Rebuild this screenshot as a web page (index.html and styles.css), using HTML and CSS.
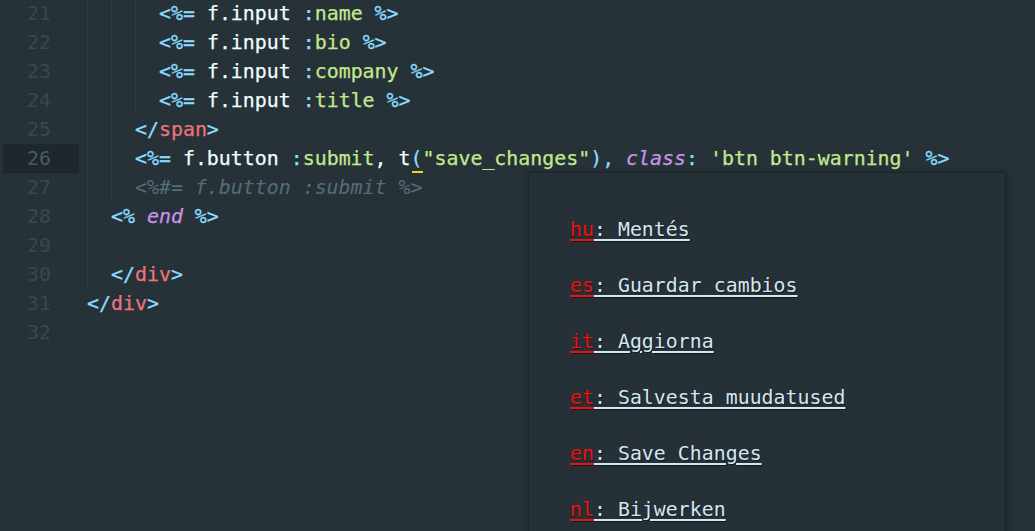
FILE: index.html
```html
<!DOCTYPE html>
<html>
<head>
<meta charset="utf-8">
<link rel="stylesheet" href="styles.css">
</head>
<body>
<div class="editor">
  <div class="line"><div class="num">21</div><div class="code"><span class="g"></span><span class="g"></span><span class="g"></span><span class="c">&lt;%=</span> <span class="w">f.input</span> <span class="c">:</span><span class="s">name</span> <span class="c">%&gt;</span></div></div>
  <div class="line"><div class="num">22</div><div class="code"><span class="g"></span><span class="g"></span><span class="g"></span><span class="c">&lt;%=</span> <span class="w">f.input</span> <span class="c">:</span><span class="s">bio</span> <span class="c">%&gt;</span></div></div>
  <div class="line"><div class="num">23</div><div class="code"><span class="g"></span><span class="g"></span><span class="g"></span><span class="c">&lt;%=</span> <span class="w">f.input</span> <span class="c">:</span><span class="s">company</span> <span class="c">%&gt;</span></div></div>
  <div class="line"><div class="num">24</div><div class="code"><span class="g"></span><span class="g"></span><span class="g"></span><span class="c">&lt;%=</span> <span class="w">f.input</span> <span class="c">:</span><span class="s">title</span> <span class="c">%&gt;</span></div></div>
  <div class="line"><div class="num">25</div><div class="code"><span class="g"></span><span class="g"></span><span class="c">&lt;/</span><span class="r">span</span><span class="c">&gt;</span></div></div>
  <div class="line active"><div class="num">26</div><div class="code"><span class="g"></span><span class="g"></span><span class="c">&lt;%=</span> <span class="w">f.button</span> <span class="c">:</span><span class="s">submit</span><span class="w">,</span> <span class="w">t</span><span class="c match">(</span><span class="s">"save_changes"</span><span class="c">),</span> <span class="p">class</span><span class="c">:</span> <span class="s">'btn btn-warning'</span> <span class="c">%&gt;</span></div></div>
  <div class="line"><div class="num">27</div><div class="code"><span class="g"></span><span class="g"></span><span class="cm">&lt;%#= f.button :submit %&gt;</span></div></div>
  <div class="line"><div class="num">28</div><div class="code"><span class="g"></span><span class="c">&lt;%</span> <span class="p">end</span> <span class="c">%&gt;</span></div></div>
  <div class="line"><div class="num">29</div><div class="code"><span class="g"></span></div></div>
  <div class="line"><div class="num">30</div><div class="code"><span class="g"></span><span class="c">&lt;/</span><span class="r">div</span><span class="c">&gt;</span></div></div>
  <div class="line"><div class="num">31</div><div class="code"><span class="c">&lt;/</span><span class="r">div</span><span class="c">&gt;</span></div></div>
  <div class="line"><div class="num">32</div><div class="code"></div></div>
</div>

<div class="popup">
  <a class="item"><span class="lang">hu</span>: Mentés</a>
  <a class="item"><span class="lang">es</span>: Guardar cambios</a>
  <a class="item"><span class="lang">it</span>: Aggiorna</a>
  <a class="item"><span class="lang">et</span>: Salvesta muudatused</a>
  <a class="item"><span class="lang">en</span>: Save Changes</a>
  <a class="item"><span class="lang">nl</span>: Bijwerken</a>
</div>
</body>
</html>
```

FILE: styles.css
```css
html, body {
  margin: 0;
  padding: 0;
  background: #263238;
  overflow: hidden;
  width: 1035px;
  height: 531px;
}

body {
  position: relative;
  font-family: "DejaVu Sans Mono", "Liberation Mono", monospace;
  font-size: 19.9px;
}

.editor {
  margin-top: -1px;
  display: flex;
  flex-direction: column;
}

.line {
  display: flex;
  height: 29px;
  line-height: 29px;
}

.num {
  width: 76px;
  margin-left: 3px;
  margin-right: 2px;
  box-sizing: border-box;
  padding-right: 28px;
  text-align: right;
  color: #38484f;
  flex: none;
}

.line.active .num {
  background: #1e272c;
  color: #4a5b64;
}

.code {
  display: block;
  padding-left: 6px;
  white-space: pre;
  color: #eeffff;
  -webkit-text-stroke: 0.25px currentColor;
}

.g {
  display: inline-block;
  vertical-align: top;
  width: 24px;
  height: 29px;
  box-sizing: border-box;
  border-left: 1px dotted #34434b;
}

.c { color: #89ddff; }
.w { color: #eeffff; }
.s { color: #c3e88d; }
.r { color: #f07178; }
.p { color: #c792ea; font-style: italic; }
.cm { color: #546e7a; font-style: italic; -webkit-text-stroke: 0; }

.match {
  position: relative;
}
.match::after {
  content: "";
  position: absolute;
  left: 1px;
  right: 0;
  bottom: -3px;
  height: 2px;
  background: #ffcb2b;
}

.popup {
  position: absolute;
  left: 528px;
  top: 172px;
  width: 478px;
  height: 380px;
  box-sizing: border-box;
  background: #263137;
  border: 1px solid #1c2529;
  box-shadow: 0 0 6px rgba(0, 0, 0, 0.25);
  padding: 45px 0 0 41px;
  display: flex;
  flex-direction: column;
  align-items: flex-start;
  gap: 32px;
}

.item {
  display: block;
  font-size: 19.9px;
  line-height: 24px;
  color: #d4e6f1;
  text-decoration: underline;
  text-decoration-color: #d4e6f1;
  text-decoration-thickness: 2px;
  text-underline-offset: 3px;
  white-space: pre;
  text-shadow: 1px 1px 0 rgba(0, 0, 0, 0.45);
}

.lang {
  color: #ee1111;
  text-decoration: underline;
  text-decoration-color: #ee1111;
  text-decoration-thickness: 2px;
  text-underline-offset: 3px;
}
```
